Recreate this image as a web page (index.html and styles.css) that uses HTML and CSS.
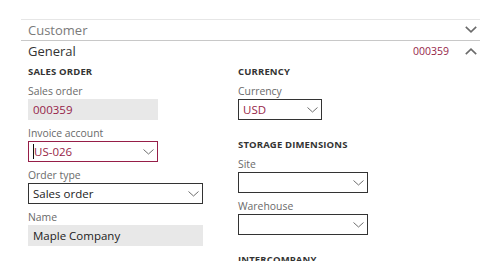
FILE: index.html
```html
<!DOCTYPE html>
<html lang="en">
<head>
<meta charset="utf-8">
<title>Sales order</title>
<link rel="stylesheet" href="styles.css">
</head>
<body>
<div class="form">
  <div class="fasttab collapsed">
    <span class="tab-title">Customer</span>
    <span class="tab-summary"></span>
    <svg class="tab-chevron" width="12" height="7" viewBox="0 0 12 7"><polyline points="0.8,0.8 6,5.8 11.2,0.8" fill="none" stroke="#6b6b6b" stroke-width="1.6"/></svg>
  </div>
  <div class="fasttab expanded">
    <span class="tab-title">General</span>
    <span class="tab-summary">000359</span>
    <svg class="tab-chevron" width="12" height="7" viewBox="0 0 12 7"><polyline points="0.8,6.2 6,1.2 11.2,6.2" fill="none" stroke="#6b6b6b" stroke-width="1.6"/></svg>
  </div>
  <div class="tab-body">
    <div class="col col-left">
      <div class="group">
        <div class="group-title">SALES ORDER</div>
        <div class="field">
          <div class="label">Sales order</div>
          <div class="input readonly w130"><span class="value accent">000359</span></div>
        </div>
        <div class="field">
          <div class="label">Invoice account</div>
          <div class="input focused w130"><span class="value accent"><span class="caret"></span>US-026</span>
            <svg class="dd" width="11" height="6" viewBox="0 0 11 6"><polyline points="0.5,0.5 5.5,5 10.5,0.5" fill="none" stroke="#6e6e6e" stroke-width="1"/></svg></div>
        </div>
        <div class="field">
          <div class="label">Order type</div>
          <div class="input w175"><span class="value">Sales order</span>
            <svg class="dd" width="11" height="6" viewBox="0 0 11 6"><polyline points="0.5,0.5 5.5,5 10.5,0.5" fill="none" stroke="#6e6e6e" stroke-width="1"/></svg></div>
        </div>
        <div class="field">
          <div class="label">Name</div>
          <div class="input readonly w175"><span class="value">Maple Company</span></div>
        </div>
      </div>
    </div>
    <div class="col col-right">
      <div class="group">
        <div class="group-title">CURRENCY</div>
        <div class="field">
          <div class="label">Currency</div>
          <div class="input w84"><span class="value accent">USD</span>
            <svg class="dd" width="11" height="6" viewBox="0 0 11 6"><polyline points="0.5,0.5 5.5,5 10.5,0.5" fill="none" stroke="#6e6e6e" stroke-width="1"/></svg></div>
        </div>
      </div>
      <div class="group">
        <div class="group-title">STORAGE DIMENSIONS</div>
        <div class="field">
          <div class="label">Site</div>
          <div class="input w130"><span class="value"></span>
            <svg class="dd" width="11" height="6" viewBox="0 0 11 6"><polyline points="0.5,0.5 5.5,5 10.5,0.5" fill="none" stroke="#6e6e6e" stroke-width="1"/></svg></div>
        </div>
        <div class="field">
          <div class="label">Warehouse</div>
          <div class="input w130"><span class="value"></span>
            <svg class="dd" width="11" height="6" viewBox="0 0 11 6"><polyline points="0.5,0.5 5.5,5 10.5,0.5" fill="none" stroke="#6e6e6e" stroke-width="1"/></svg></div>
        </div>
      </div>
      <div class="group">
        <div class="group-title">INTERCOMPANY</div>
      </div>
    </div>
  </div>
</div>
</body>
</html>
```

FILE: styles.css
```css
html, body {
  margin: 0;
  padding: 0;
  background: #ffffff;
}

body {
  font-family: "Open Sans", "Noto Sans", "Liberation Sans", sans-serif;
  color: #333333;
  overflow: hidden;
}

.form {
  margin-left: 21px;
  width: 459px;
  padding-top: 19px;
}

.fasttab {
  display: flex;
  align-items: center;
  height: 20px;
  border-top: 1px solid #e6e6e6;
}

.fasttab.expanded {
  border-top-color: #c8c8c8;
}

.tab-title {
  flex: 1;
  padding-left: 7px;
  font-size: 13px;
  line-height: 20px;
  color: #333333;
}

.collapsed .tab-title {
  color: #7a7a7a;
}

.tab-summary {
  font-size: 10.5px;
  line-height: 20px;
  color: #961e48;
  margin-right: 16px;
}

.tab-chevron {
  display: block;
  margin-right: 3px;
}

.collapsed .tab-chevron {
  margin-top: -2px;
}

.tab-body {
  display: flex;
  padding-left: 7px;
}

.col-left {
  width: 210px;
}

.col-right {
  flex: 1;
}

.group + .group {
  margin-top: 14px;
}

.group-title {
  height: 17px;
  padding-top: 4px;
  box-sizing: border-box;
  font-size: 9.5px;
  line-height: 14px;
  font-weight: 700;
  letter-spacing: 0.15px;
  color: #333333;
}

.label {
  height: 21px;
  padding-top: 5px;
  box-sizing: border-box;
  font-size: 10.4px;
  line-height: 16px;
  color: #6a6a6a;
}

.input {
  display: flex;
  align-items: center;
  justify-content: space-between;
  height: 21px;
  box-sizing: border-box;
  border: 1px solid #333333;
  padding: 0 3px 0 4px;
  font-size: 11.5px;
  line-height: 19px;
  color: #222222;
}

.input.readonly {
  border-color: transparent;
  background: #e8e8e8;
}

.input.focused {
  border-color: #961e48;
}

.value {
  display: flex;
  align-items: center;
  white-space: nowrap;
}

.accent {
  color: #961e48;
}

.caret {
  display: inline-block;
  width: 1px;
  height: 15px;
  background: #111111;
}

.dd {
  display: block;
  flex: none;
}

.w130 { width: 130px; }
.w175 { width: 175px; }
.w84 { width: 84px; }
```
